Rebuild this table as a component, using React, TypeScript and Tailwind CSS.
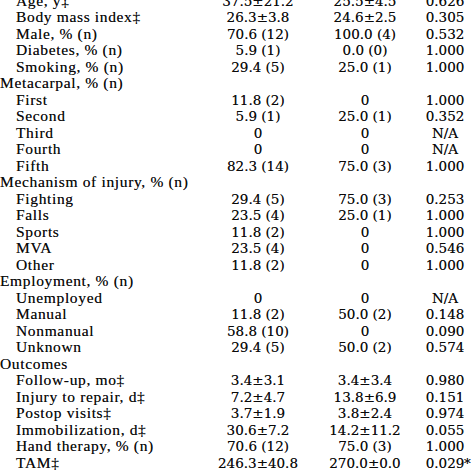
const rows: { label: string; a: string; b: string; p: string; head?: boolean; star?: boolean }[] = [
  { label: 'Age, y‡', a: '37.5±21.2', b: '25.5±4.5', p: '0.626' },
  { label: 'Body mass index‡', a: '26.3±3.8', b: '24.6±2.5', p: '0.305' },
  { label: 'Male, % (n)', a: '70.6 (12)', b: '100.0 (4)', p: '0.532' },
  { label: 'Diabetes, % (n)', a: '5.9 (1)', b: '0.0 (0)', p: '1.000' },
  { label: 'Smoking, % (n)', a: '29.4 (5)', b: '25.0 (1)', p: '1.000' },
  { label: 'Metacarpal, % (n)', a: '', b: '', p: '', head: true },
  { label: 'First', a: '11.8 (2)', b: '0', p: '1.000' },
  { label: 'Second', a: '5.9 (1)', b: '25.0 (1)', p: '0.352' },
  { label: 'Third', a: '0', b: '0', p: 'N/A' },
  { label: 'Fourth', a: '0', b: '0', p: 'N/A' },
  { label: 'Fifth', a: '82.3 (14)', b: '75.0 (3)', p: '1.000' },
  { label: 'Mechanism of injury, % (n)', a: '', b: '', p: '', head: true },
  { label: 'Fighting', a: '29.4 (5)', b: '75.0 (3)', p: '0.253' },
  { label: 'Falls', a: '23.5 (4)', b: '25.0 (1)', p: '1.000' },
  { label: 'Sports', a: '11.8 (2)', b: '0', p: '1.000' },
  { label: 'MVA', a: '23.5 (4)', b: '0', p: '0.546' },
  { label: 'Other', a: '11.8 (2)', b: '0', p: '1.000' },
  { label: 'Employment, % (n)', a: '', b: '', p: '', head: true },
  { label: 'Unemployed', a: '0', b: '0', p: 'N/A' },
  { label: 'Manual', a: '11.8 (2)', b: '50.0 (2)', p: '0.148' },
  { label: 'Nonmanual', a: '58.8 (10)', b: '0', p: '0.090' },
  { label: 'Unknown', a: '29.4 (5)', b: '50.0 (2)', p: '0.574' },
  { label: 'Outcomes', a: '', b: '', p: '', head: true },
  { label: 'Follow-up, mo‡', a: '3.4±3.1', b: '3.4±3.4', p: '0.980' },
  { label: 'Injury to repair, d‡', a: '7.2±4.7', b: '13.8±6.9', p: '0.151' },
  { label: 'Postop visits‡', a: '3.7±1.9', b: '3.8±2.4', p: '0.974' },
  { label: 'Immobilization, d‡', a: '30.6±7.2', b: '14.2±11.2', p: '0.055' },
  { label: 'Hand therapy, % (n)', a: '70.6 (12)', b: '75.0 (3)', p: '1.000' },
  { label: 'TAM‡', a: '246.3±40.8', b: '270.0±0.0', p: '0.029', star: true },
]

export default function App() {
  return (
    <div className="w-[474px] h-[474px] overflow-hidden bg-white text-[#0a0a0a] [text-shadow:0_0_0.5px_rgba(0,0,0,0.55)]">
      <div className="mt-[-7.5px]">
        {rows.map((r) => (
          <div key={r.label} className="flex items-baseline h-[16.5px] leading-[16.5px] whitespace-nowrap">
            <div
              className={`w-[208px] shrink-0 font-['Liberation_Serif',serif] text-[15.5px] tracking-[0.65px] ${r.head ? 'pl-0' : 'pl-[16px]'}`}
            >
              {r.label}
            </div>
            <div className="w-[100px] shrink-0 text-center font-['DejaVu_Serif',serif] text-[13.5px]">{r.a}</div>
            <div className="w-[114px] shrink-0 text-center font-['DejaVu_Serif',serif] text-[13.5px]">{r.b}</div>
            <div className="relative w-[46px] shrink-0 text-center font-['DejaVu_Serif',serif] text-[13.5px]">
              {r.p}
              {r.star && <span className="absolute left-[42px] top-0">*</span>}
            </div>
          </div>
        ))}
      </div>
    </div>
  )
}
